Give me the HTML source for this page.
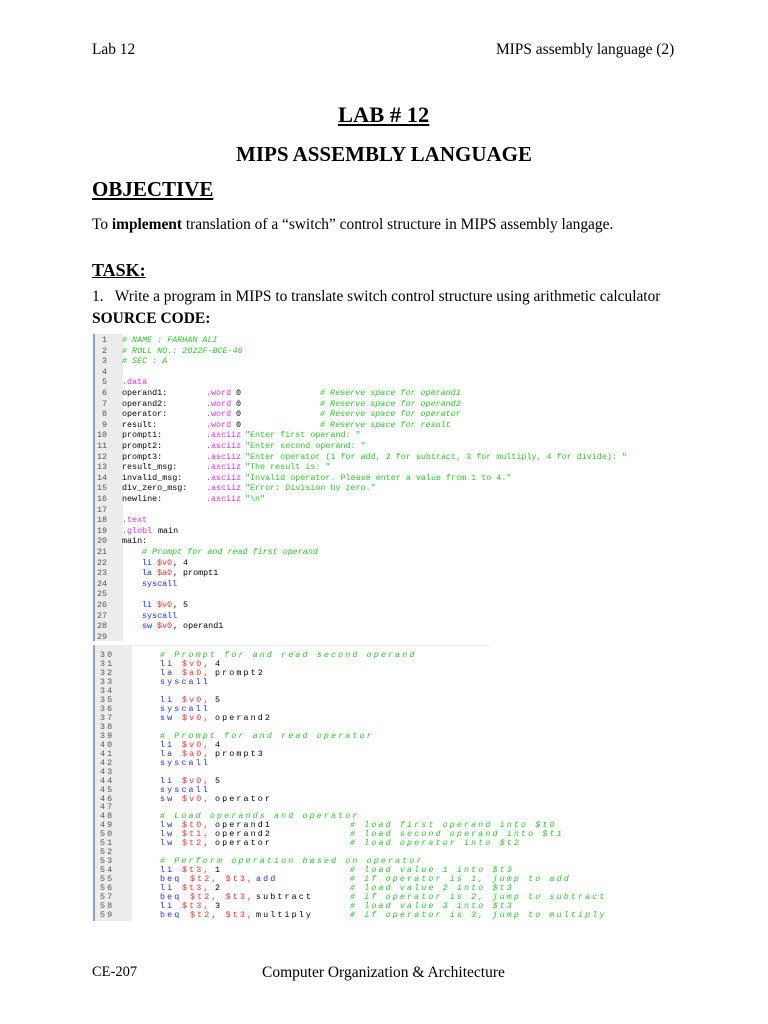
<!DOCTYPE html>
<html><head><meta charset="utf-8"><style>
body{margin:0;width:768px;height:1024px;background:#fff;position:relative;font-family:"Liberation Serif",serif;color:#000;overflow:hidden}
.t{position:absolute;white-space:nowrap;line-height:1}
.c{position:absolute;font-family:"Liberation Mono",monospace;white-space:pre;line-height:1;font-size:8.4px}
.g{color:#2fc42f;font-style:italic}.m{color:#e030e0}.b{color:#2030e0}.r{color:#e83030}.n{color:#555}.g2{color:#2fc42f}
</style></head><body>
<div class="t" style="left:92px;top:42px;font-size:15.4px">Lab 12</div>
<div class="t" style="left:496px;top:42px;font-size:15.4px">MIPS assembly language (2)</div>
<div class="t" style="left:338px;top:104px;font-size:22.5px;font-weight:bold;text-decoration:underline">LAB # 12</div>
<div class="t" style="left:236px;top:144px;font-size:21px;font-weight:bold">MIPS ASSEMBLY LANGUAGE</div>
<div class="t" style="left:92px;top:179px;font-size:21px;font-weight:bold;text-decoration:underline">OBJECTIVE</div>
<div class="t" style="left:92px;top:217px;font-size:15.4px">To <b>implement</b> translation of a “switch” control structure in MIPS assembly langage.</div>
<div class="t" style="left:92px;top:261px;font-size:18px;font-weight:bold;text-decoration:underline">TASK:</div>
<div class="t" style="left:92px;top:289px;font-size:15.4px">1.&nbsp;&nbsp; Write a program in MIPS to translate switch control structure using arithmetic calculator</div>
<div class="t" style="left:92px;top:311px;font-size:15.5px;font-weight:bold">SOURCE CODE:</div>

<div style="position:absolute;left:93px;top:334px;width:28px;height:307px;background:#ececec;border-left:2px solid #8aa0d0"></div>
<div id="c1"></div>
<div style="position:absolute;left:93px;top:645px;width:37px;height:276px;background:#ececec;border-left:2px solid #8aa0d0"></div>
<div style="position:absolute;left:130px;top:645px;width:360px;height:1px;background:#e8eef8"></div>
<div id="c2"></div>

<div class="t" style="left:92px;top:965px;font-size:14.5px">CE-207</div>
<div class="t" style="left:262px;top:965px;font-size:15.5px">Computer Organization &amp; Architecture</div>
<script>
function L(host,top,parts,ls){var h=document.getElementById(host);parts.forEach(function(p){var d=document.createElement('div');d.className='c '+(p[2]||'');d.style.left=p[0]+'px';d.style.top=top+'px';if(ls)d.style.letterSpacing=ls+'px';d.textContent=p[1];h.appendChild(d);});}
var W=206,Z=236,S=245,C=320,X=122,I=142,R=157,V=173;
var a=[
[['# NAME : FARHAN ALI',X,'g']],
[['# ROLL NO.: 2022F-BCE-46',X,'g']],
[['# SEC : A',X,'g']],
[],
[['.data',X,'m']],
[['operand1:',X,''],['.word',W,'m'],['0',Z,''],['# Reserve space for operand1',C,'g']],
[['operand2:',X,''],['.word',W,'m'],['0',Z,''],['# Reserve space for operand2',C,'g']],
[['operator:',X,''],['.word',W,'m'],['0',Z,''],['# Reserve space for operator',C,'g']],
[['result:',X,''],['.word',W,'m'],['0',Z,''],['# Reserve space for result',C,'g']],
[['prompt1:',X,''],['.asciiz',W,'m'],['"Enter first operand: "',S,'g2']],
[['prompt2:',X,''],['.asciiz',W,'m'],['"Enter second operand: "',S,'g2']],
[['prompt3:',X,''],['.asciiz',W,'m'],['"Enter operator (1 for add, 2 for subtract, 3 for multiply, 4 for divide): "',S,'g2']],
[['result_msg:',X,''],['.asciiz',W,'m'],['"The result is: "',S,'g2']],
[['invalid_msg:',X,''],['.asciiz',W,'m'],['"Invalid operator. Please enter a value from 1 to 4."',S,'g2']],
[['div_zero_msg:',X,''],['.asciiz',W,'m'],['"Error: Division by zero."',S,'g2']],
[['newline:',X,''],['.asciiz',W,'m'],['"\\n"',S,'g2']],
[],
[['.text',X,'m']],
[['.globl',X,'m'],['main',158,'']],
[['main:',X,'']],
[['# Prompt for and read first operand',I,'g']],
[['li',I,'b'],['$v0',R,'r'],[', 4',V,'']],
[['la',I,'b'],['$a0',R,'r'],[', prompt1',V,'']],
[['syscall',I,'b']],
[],
[['li',I,'b'],['$v0',R,'r'],[', 5',V,'']],
[['syscall',I,'b']],
[['sw',I,'b'],['$v0',R,'r'],[', operand1',V,'']],
[]];
a.forEach(function(l,i){var top=336+i*10.6;var p=[[97,String(i+1).padStart(2,' '),'n']];l.forEach(function(x){p.push([x[1],x[0],x[2]]);});L('c1',top,p,0);});
var A=160,B=182,D=215,E=190,F=256,K=350;
var b=[
[['# Prompt for and read second operand',A,'g']],
[['li',A,'b'],['$v0,',B,'r'],['4',D,'']],
[['la',A,'b'],['$a0,',B,'r'],['prompt2',D,'']],
[['syscall',A,'b']],
[],
[['li',A,'b'],['$v0,',B,'r'],['5',D,'']],
[['syscall',A,'b']],
[['sw',A,'b'],['$v0,',B,'r'],['operand2',D,'']],
[],
[['# Prompt for and read operator',A,'g']],
[['li',A,'b'],['$v0,',B,'r'],['4',D,'']],
[['la',A,'b'],['$a0,',B,'r'],['prompt3',D,'']],
[['syscall',A,'b']],
[],
[['li',A,'b'],['$v0,',B,'r'],['5',D,'']],
[['syscall',A,'b']],
[['sw',A,'b'],['$v0,',B,'r'],['operator',D,'']],
[],
[['# Load operands and operator',A,'g']],
[['lw',A,'b'],['$t0,',B,'r'],['operand1',D,''],['# load first operand into $t0',K,'g']],
[['lw',A,'b'],['$t1,',B,'r'],['operand2',D,''],['# load second operand into $t1',K,'g']],
[['lw',A,'b'],['$t2,',B,'r'],['operator',D,''],['# load operator into $t2',K,'g']],
[],
[['# Perform operation based on operator',A,'g']],
[['li',A,'b'],['$t3,',B,'r'],['1',D,''],['# load value 1 into $t3',K,'g']],
[['beq',A,'b'],['$t2, $t3,',E,'r'],['add',F,'b'],['# if operator is 1, jump to add',K,'g']],
[['li',A,'b'],['$t3,',B,'r'],['2',D,''],['# load value 2 into $t3',K,'g']],
[['beq',A,'b'],['$t2, $t3,',E,'r'],['subtract',F,''],['# if operator is 2, jump to subtract',K,'g']],
[['li',A,'b'],['$t3,',B,'r'],['3',D,''],['# load value 3 into $t3',K,'g']],
[['beq',A,'b'],['$t2, $t3,',E,'r'],['multiply',F,''],['# if operator is 3, jump to multiply',K,'g']]];
b.forEach(function(l,i){var top=651+i*8.97;var p=[[100,String(30+i),'n']];l.forEach(function(x){p.push([x[1],x[0],x[2]]);});L('c2',top,p,2.1);});
</script>
</body></html>
